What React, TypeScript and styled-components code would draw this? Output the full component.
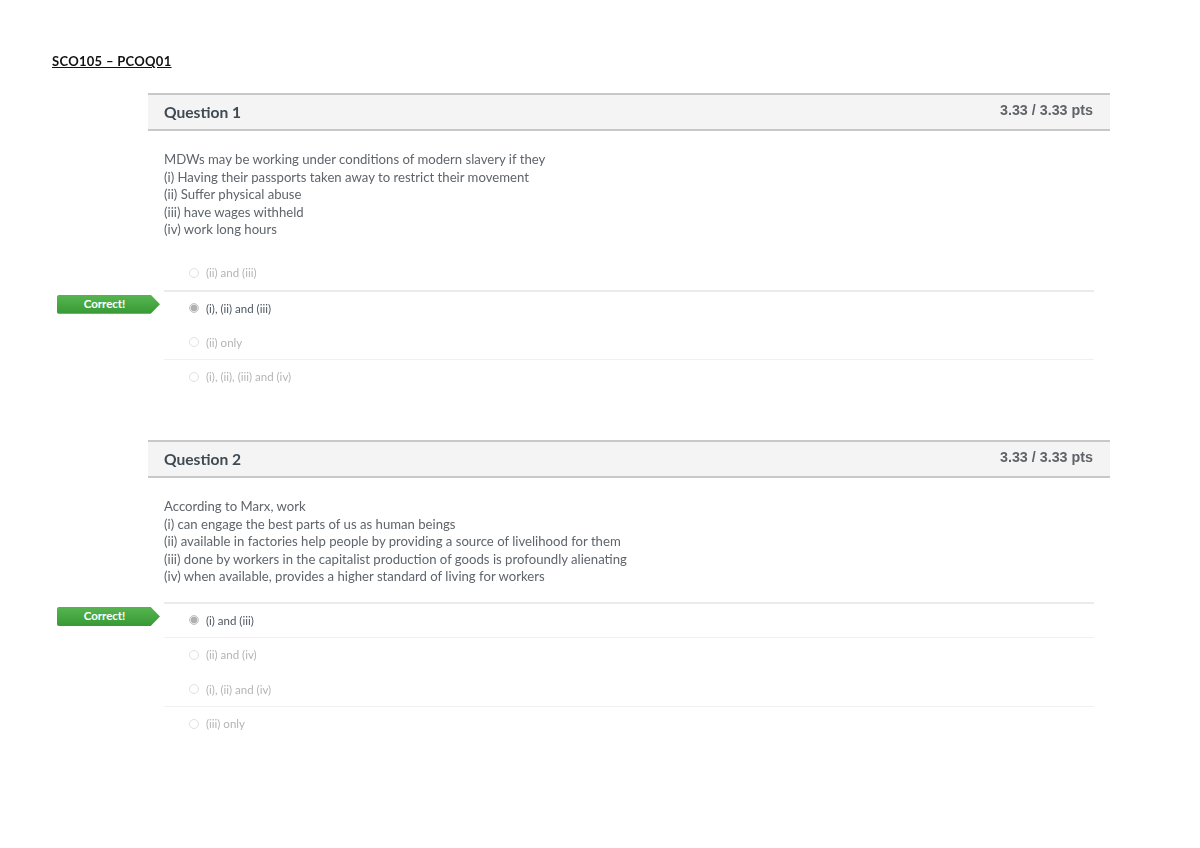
import React from "react";
import styled, { createGlobalStyle } from "styled-components";

const questions = [
  {
    title: "Question 1",
    body: [
      "MDWs may be working under conditions of modern slavery if they",
      "(i) Having their passports taken away to restrict their movement",
      "(ii) Suffer physical abuse",
      "(iii) have wages withheld",
      "(iv) work long hours",
    ],
    answers: [
      { text: "(ii) and (iii)", line: "none" },
      { text: "(i), (ii) and (iii)", line: "strong", picked: true },
      { text: "(ii) only", line: "none" },
      { text: "(i), (ii), (iii) and (iv)", line: "soft" },
    ],
  },
  {
    title: "Question 2",
    body: [
      "According to Marx, work",
      "(i) can engage the best parts of us as human beings",
      "(ii) available in factories help people by providing a source of livelihood for them",
      "(iii) done by workers in the capitalist production of goods is profoundly alienating",
      "(iv) when available, provides a higher standard of living for workers",
    ],
    answers: [
      { text: "(i) and (iii)", line: "strong", picked: true },
      { text: "(ii) and (iv)", line: "soft" },
      { text: "(i), (ii) and (iv)", line: "none" },
      { text: "(iii) only", line: "soft" },
    ],
  },
];

export default function App() {
  return (
    <Page>
      <GlobalStyle />
      <DocTitle>SCO105 – PCOQ01</DocTitle>
      {questions.map((q) => (
        <Question key={q.title}>
          <Header>
            <QuestionName>{q.title}</QuestionName>
            <Points>3.33 / 3.33 pts</Points>
          </Header>
          <Body>
            {q.body.map((line) => (
              <div key={line}>{line}</div>
            ))}
          </Body>
          <Answers>
            {q.answers.map((a) => (
              <Answer key={a.text} $line={a.line}>
                {a.picked && <CorrectFlag>Correct!</CorrectFlag>}
                <Radio $picked={!!a.picked} />
                <AnswerText $picked={!!a.picked}>{a.text}</AnswerText>
              </Answer>
            ))}
          </Answers>
        </Question>
      ))}
    </Page>
  );
}

const GlobalStyle = createGlobalStyle`
  html, body {
    margin: 0;
    background: #fff;
  }
`;

const Page = styled.div`
  width: 1200px;
  height: 848px;
  box-sizing: border-box;
  padding: 53px 90px 0 52px;
  font-family: Lato, "Liberation Sans", sans-serif;
  overflow: hidden;
  filter: blur(0.45px);
`;

const DocTitle = styled.div`
  height: 40px;
  font-size: 13px;
  line-height: 17px;
  font-weight: 700;
  letter-spacing: 0.3px;
  color: #111;
  text-decoration: underline;
`;

const Question = styled.section`
  margin-left: 96px;
  height: 347px;
`;

const Header = styled.header`
  height: 34px;
  display: flex;
  justify-content: space-between;
  padding: 0 17px 0 16px;
  background: #f4f4f4;
  border-top: 2px solid #c8c8c8;
  border-bottom: 2px solid #c8c8c8;
`;

const QuestionName = styled.h2`
  margin: 0;
  font-size: 15.6px;
  line-height: 35px;
  font-weight: 700;
  color: #3f4a52;
`;

const Points = styled.div`
  font-family: "Liberation Sans", Arial, sans-serif;
  font-size: 14.3px;
  line-height: 30px;
  font-weight: 700;
  color: #606468;
`;

const Body = styled.div`
  height: 124px;
  box-sizing: border-box;
  padding: 20px 16px 0;
  font-size: 13.15px;
  line-height: 17.5px;
  color: #5f656b;
`;

const Answers = styled.div`
  margin: 0 16px;
`;

const Answer = styled.div<{ $line: string }>`
  position: relative;
  height: 34.7px;
  box-sizing: border-box;
  display: flex;
  align-items: center;
  padding-left: 25px;
  border-top: ${(p) =>
    p.$line === "strong"
      ? "2px solid #ebebeb"
      : p.$line === "soft"
        ? "1px solid #f0f0f0"
        : "1px solid transparent"};
`;

const Radio = styled.span<{ $picked: boolean }>`
  width: 10px;
  height: 10px;
  box-sizing: border-box;
  border-radius: 50%;
  border: 1px solid ${(p) => (p.$picked ? "#c4c4c4" : "#e0e0e0")};
  background: ${(p) =>
    p.$picked ? "radial-gradient(circle, #b0b0b0 0 3px, #e8e8e8 3.6px)" : "#fff"};
  margin-right: 7px;
`;

const AnswerText = styled.span<{ $picked: boolean }>`
  font-size: 11.5px;
  color: ${(p) => (p.$picked ? "#4b5560" : "#b4b4b4")};
`;

const CorrectFlag = styled.div`
  position: absolute;
  left: -107px;
  top: 3px;
  width: 103px;
  height: 19px;
  padding: 0 8px 2px 0;
  box-sizing: border-box;
  display: flex;
  align-items: center;
  justify-content: center;
  font-size: 11.5px;
  font-weight: 700;
  color: #fff;
  background: linear-gradient(#57b550, #379a35);
  clip-path: polygon(0 0, 91% 0, 100% 50%, 91% 100%, 0 100%);
  border-radius: 2px 0 0 2px;
`;
